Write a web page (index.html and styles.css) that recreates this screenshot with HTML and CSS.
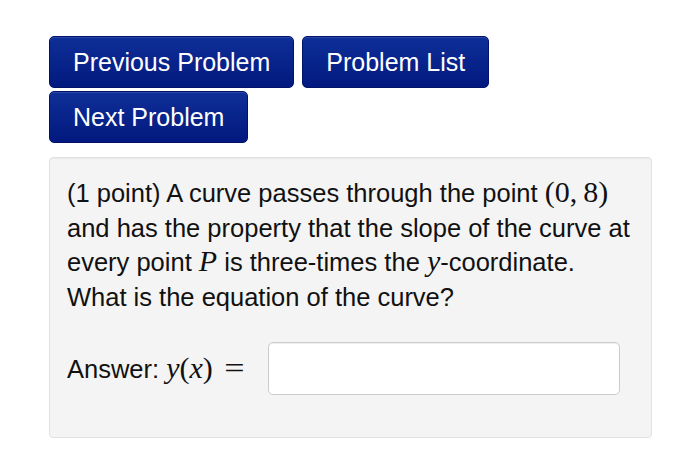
FILE: index.html
```html
<!DOCTYPE html>
<html>
<head>
<meta charset="utf-8">
<link rel="stylesheet" href="styles.css">
</head>
<body>
<div class="page">
  <div class="nav">
    <a class="btn">Previous Problem</a>
    <a class="btn">Problem List</a>
    <a class="btn">Next Problem</a>
  </div>
  <div class="well">
    <p class="problem">(1 point) A curve passes through the point <span class="math">(0,&thinsp;8)</span><br>and has the property that the slope of the curve at<br>every point <span class="math mi">P</span> is three-times the <span class="math mi">y</span>-coordinate.<br>What is the equation of the curve?</p>
    <div class="answer">
      <span class="label">Answer: <span class="math"><span class="mi">y</span>(<span class="mi">x</span>)<span class="eq">=</span></span></span>
      <input class="field" type="text">
    </div>
  </div>
</div>
</body>
</html>
```
FILE: styles.css
```css
html, body {
  margin: 0;
  padding: 0;
  background: #ffffff;
}
.page {
  padding: 36px 0 0 49px;
  font-family: "Liberation Sans", Arial, sans-serif;
  color: #111111;
}
.nav {
  display: flex;
  flex-wrap: wrap;
  column-gap: 8px;
  row-gap: 3px;
  width: 450px;
}
.btn {
  display: block;
  height: 50px;
  line-height: 50px;
  padding: 0 23px;
  font-size: 25px;
  color: #ffffff;
  background: linear-gradient(#0e2f98, #02197f);
  border: 1px solid #00126a;
  border-radius: 5px;
  box-shadow: inset 0 1px 0 rgba(255,255,255,0.12);
}
.well {
  margin-top: 14px;
  width: 565px;
  padding: 18px 19px 42px 17px;
  background: #f4f4f4;
  border: 1px solid #e2e2e2;
  border-radius: 4px;
  box-shadow: inset 0 1px 1px rgba(0,0,0,0.05);
}
.problem {
  margin: 0;
  font-size: 25.5px;
  line-height: 34.7px;
  white-space: nowrap;
}
.math {
  font-family: "Liberation Serif", "Times New Roman", serif;
  font-size: 30px;
  line-height: 1;
}
.mi {
  font-style: italic;
}
.eq {
  display: inline-block;
  margin-left: 13px;
  transform: scaleX(1.2);
}
.answer {
  display: flex;
  align-items: center;
  margin-top: 27px;
}
.label {
  font-size: 25.5px;
  width: 201px;
}
.field {
  box-sizing: border-box;
  width: 352px;
  height: 53px;
  margin: 0;
  border: 1px solid #cccccc;
  border-radius: 5px;
  background: #ffffff;
  box-shadow: inset 0 1px 1px rgba(0,0,0,0.075);
}
```
